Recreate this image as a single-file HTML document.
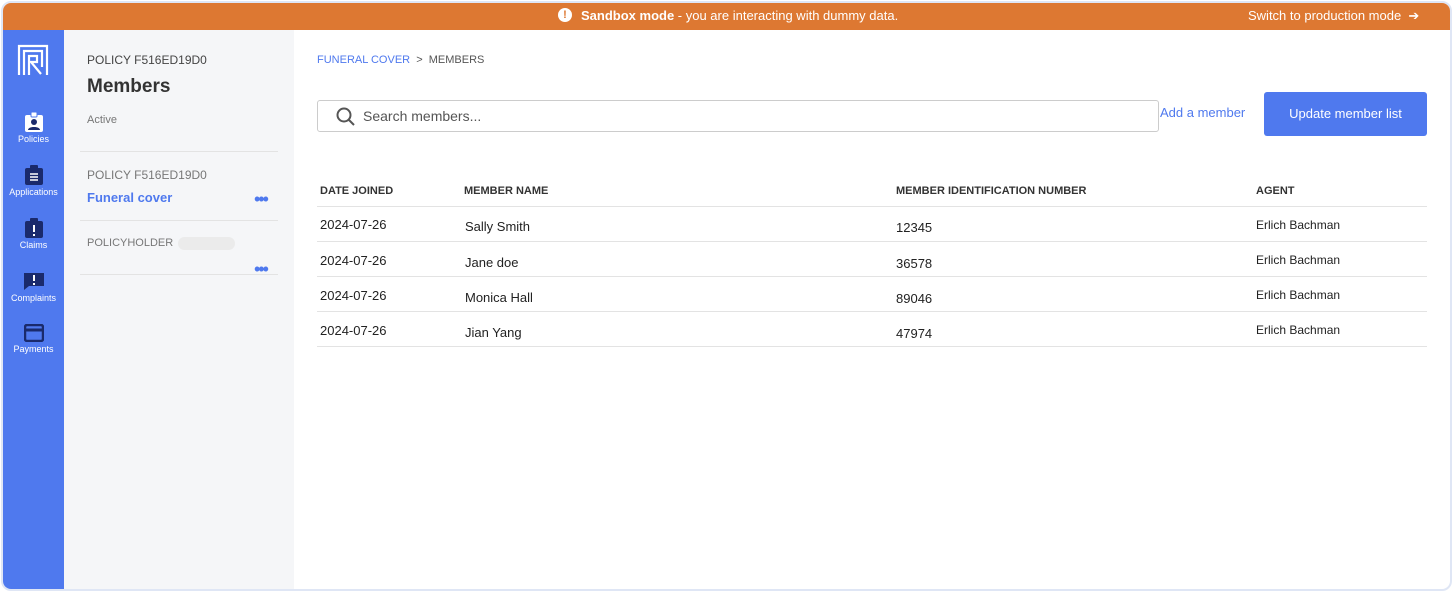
<!DOCTYPE html>
<html><head><meta charset="utf-8"><style>
*{box-sizing:border-box;margin:0;padding:0}
body{width:1453px;height:592px;background:#fff;font-family:"Liberation Sans",sans-serif;position:relative;overflow:hidden;color:#333}
.frame{position:absolute;left:1px;top:1px;width:1451px;height:590px;border:2px solid #dfe6f5;border-radius:10px;overflow:hidden;background:#fff}
.banner{position:absolute;left:0;top:0;width:100%;height:27px;background:#dd7832;color:#fff;font-size:13px}
.side{position:absolute;left:0;top:27px;width:61px;bottom:0;background:#4f79ee}
.panel{position:absolute;left:61px;top:27px;width:230px;bottom:0;background:#f5f6f8}
.a{position:absolute;white-space:nowrap}
.nav{position:absolute;left:0;width:61px;text-align:center;font-size:9px;color:#fff}
.th{font-size:11px;font-weight:bold;color:#333}
.td{font-size:13px;color:#222}
.line{position:absolute;left:314px;width:1110px;height:1px;background:#e3e3e3}
.dots{position:absolute;color:#4f79ee;font-size:18px;letter-spacing:-2px;line-height:10px}
</style></head><body><div class="frame">
<div class="banner">
 <div class="a" style="left:555px;top:5px;width:14px;height:14px;border-radius:50%;background:#fff;color:#dd7832;font-size:11px;font-weight:bold;text-align:center;line-height:14px">!</div>
 <div class="a" style="left:578px;top:5px"><b>Sandbox mode</b> - you are interacting with dummy data.</div>
 <div class="a" style="left:1245px;top:5px">Switch to production mode &nbsp;➔</div>
</div>
<div class="side">
 <svg class="a" style="left:14px;top:14px" width="32" height="32" viewBox="0 0 32 32" fill="none" stroke="#fff" stroke-width="2.2"><path d="M2 31V2h28v29M7 31V7h18v16M12 31V12h8v6h-6l10 12"/></svg>
 <div class="nav" style="top:82px"><svg width="18" height="20" viewBox="0 0 18 20"><rect x="0" y="3" width="18" height="17" rx="2" fill="#fff"/><rect x="6" y="0" width="6" height="5" rx="1" fill="#fff" stroke="#4f79ee"/><circle cx="9" cy="10" r="3" fill="#1a2a6c"/><path d="M3 18c0-4 12-4 12 0z" fill="#1a2a6c"/></svg><div style="margin-top:0">Policies</div></div>
 <div class="nav" style="top:135px"><svg width="18" height="20" viewBox="0 0 18 20"><rect x="0" y="3" width="18" height="17" rx="2" fill="#1a2a6c"/><rect x="5" y="0" width="8" height="5" rx="1" fill="#1a2a6c"/><path d="M5 9h8M5 12h8M5 15h8" stroke="#fff" stroke-width="1.5"/></svg><div>Applications</div></div>
 <div class="nav" style="top:188px"><svg width="18" height="20" viewBox="0 0 18 20"><rect x="0" y="3" width="18" height="17" rx="2" fill="#1a2a6c"/><rect x="5" y="0" width="8" height="5" rx="1" fill="#1a2a6c"/><path d="M9 7v7M9 16v2" stroke="#fff" stroke-width="2"/></svg><div>Claims</div></div>
 <div class="nav" style="top:241px"><svg width="20" height="20" viewBox="0 0 20 20"><path d="M0 2h20v13H5l-5 4z" fill="#1a2a6c"/><path d="M10 4v6M10 12v2" stroke="#fff" stroke-width="2"/></svg><div>Complaints</div></div>
 <div class="nav" style="top:294px"><svg width="20" height="18" viewBox="0 0 20 18"><rect x="1" y="1" width="18" height="16" rx="2" fill="none" stroke="#1a2a6c" stroke-width="2.5"/><path d="M1 6h18" stroke="#1a2a6c" stroke-width="3"/></svg><div>Payments</div></div>
</div>
<div class="panel">
 <div class="a" style="left:23px;top:23px;font-size:12px;color:#444">POLICY F516ED19D0</div>
 <div class="a" style="left:23px;top:46px;font-size:19px;font-weight:bold;color:#333">Members</div>
 <div class="a" style="left:23px;top:84px;font-size:11px;color:#777">Active</div>
 <div class="a" style="left:16px;top:121px;width:198px;height:1px;background:#e3e3e3"></div>
 <div class="a" style="left:23px;top:138px;font-size:12px;color:#777">POLICY F516ED19D0</div>
 <div class="a" style="left:23px;top:160px;font-size:13px;font-weight:bold;color:#4f79ee">Funeral cover</div>
 <div class="dots" style="left:190px;top:164px">•••</div>
 <div class="a" style="left:16px;top:190px;width:198px;height:1px;background:#e3e3e3"></div>
 <div class="a" style="left:23px;top:207px;font-size:11px;color:#777">POLICYHOLDER</div>
 <div class="a" style="left:114px;top:207px;width:57px;height:13px;border-radius:7px;background:#ebebeb"></div>
 <div class="dots" style="left:190px;top:234px">•••</div>
 <div class="a" style="left:16px;top:244px;width:198px;height:1px;background:#e3e3e3"></div>
</div>
<div class="a" style="left:314px;top:51px;font-size:11px;color:#4f79ee">FUNERAL COVER <span style="color:#555">&nbsp;&gt;&nbsp; MEMBERS</span></div>
<div class="a" style="left:314px;top:97px;width:842px;height:32px;border:1px solid #ccc;border-radius:3px">
 <svg class="a" style="left:18px;top:6px" width="19" height="19" viewBox="0 0 19 19" fill="none" stroke="#555" stroke-width="2"><circle cx="8" cy="8" r="6.5"/><path d="M13 13l5 5"/></svg>
 <div class="a" style="left:45px;top:7px;font-size:14px;color:#555">Search members...</div>
</div>
<div class="a" style="left:1157px;top:102px;font-size:13px;color:#4f79ee">Add a member</div>
<div class="a" style="left:1261px;top:89px;width:163px;height:44px;background:#4f79ee;border-radius:3px;color:#fff;font-size:13px;text-align:center;line-height:44px">Update member list</div>
<div class="a th" style="left:317px;top:182px">DATE JOINED</div>
<div class="a th" style="left:461px;top:182px">MEMBER NAME</div>
<div class="a th" style="left:893px;top:182px">MEMBER IDENTIFICATION NUMBER</div>
<div class="a th" style="left:1253px;top:182px">AGENT</div>
<div class="line" style="top:203px"></div>
<div class="a td" style="left:317px;top:214px">2024-07-26</div><div class="a td" style="left:462px;top:216px">Sally Smith</div><div class="a td" style="left:893px;top:217px">12345</div><div class="a td" style="left:1253px;top:215px;font-size:12px">Erlich Bachman</div>
<div class="line" style="top:238px"></div>
<div class="a td" style="left:317px;top:250px">2024-07-26</div><div class="a td" style="left:462px;top:252px">Jane doe</div><div class="a td" style="left:893px;top:253px">36578</div><div class="a td" style="left:1253px;top:250px;font-size:12px">Erlich Bachman</div>
<div class="line" style="top:273px"></div>
<div class="a td" style="left:317px;top:285px">2024-07-26</div><div class="a td" style="left:462px;top:287px">Monica Hall</div><div class="a td" style="left:893px;top:288px">89046</div><div class="a td" style="left:1253px;top:285px;font-size:12px">Erlich Bachman</div>
<div class="line" style="top:308px"></div>
<div class="a td" style="left:317px;top:320px">2024-07-26</div><div class="a td" style="left:462px;top:322px">Jian Yang</div><div class="a td" style="left:893px;top:323px">47974</div><div class="a td" style="left:1253px;top:320px;font-size:12px">Erlich Bachman</div>
<div class="line" style="top:343px"></div>
</div></body></html>
